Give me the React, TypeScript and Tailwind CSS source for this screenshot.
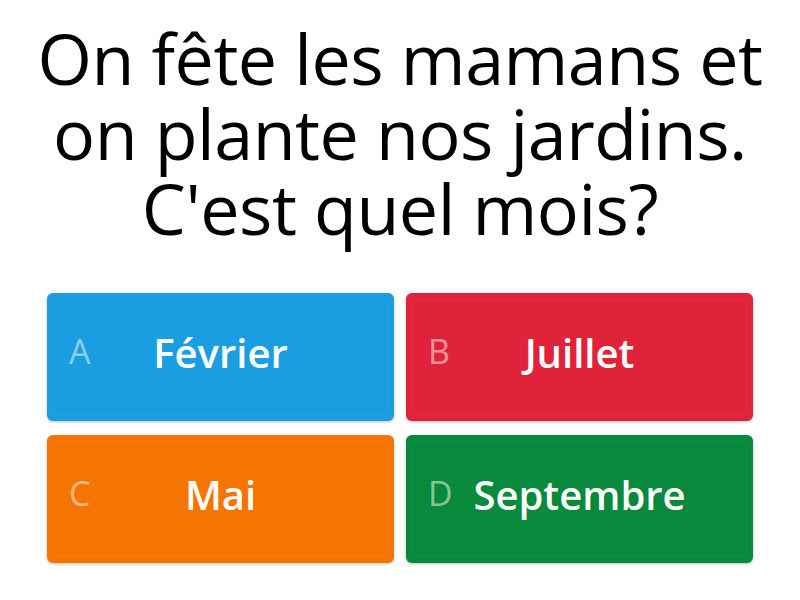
const options = [
  { letter: "A", label: "Février", bg: "bg-[#1b9de2]", border: "border-[#27a6e8]" },
  { letter: "B", label: "Juillet", bg: "bg-[#e0233a]", border: "border-[#e53249]" },
  { letter: "C", label: "Mai", bg: "bg-[#f57504]", border: "border-[#f7831a]" },
  { letter: "D", label: "Septembre", bg: "bg-[#08893b]", border: "border-[#15954a]" },
];

export default function App() {
  return (
    <div className="w-[800px] h-[600px] bg-white font-['Open_Sans',sans-serif] flex flex-col">
      <div className="h-[282px] flex items-center justify-center px-6 pb-4">
        <h1 className="text-center text-[70px] leading-[75px] text-black tracking-[-0.5px]">
          On fête les mamans et
          <br />
          on plante nos jardins.
          <br />
          C'est quel mois?
        </h1>
      </div>
      <div className="grid grid-cols-2 gap-x-3 gap-y-[14px] px-[47px] pt-[11px]">
        {options.map((o) => (
          <div
            key={o.letter}
            className={`relative h-[128px] rounded-md ${o.bg} shadow-[0_1px_3px_rgba(0,0,0,0.25)] flex items-center justify-center pb-[8px]`}
          >
            <div className={`absolute inset-[6px] rounded border ${o.border} opacity-60`} />
            <span className="absolute left-[22px] top-[38px] text-[34px] leading-[40px] text-white/50">
              {o.letter}
            </span>
            <span className="text-[40px] leading-[48px] font-semibold text-white">{o.label}</span>
          </div>
        ))}
      </div>
    </div>
  );
}
